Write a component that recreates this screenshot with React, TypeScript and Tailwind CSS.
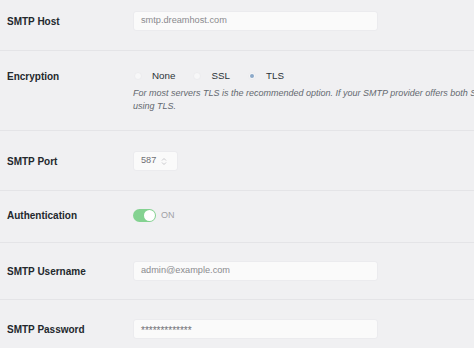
import React from "react";

function Label({ children }: { children: React.ReactNode }) {
  return (
    <div className="w-[133px] shrink-0 pl-[7px] text-[10px] font-bold text-[#23282d]">
      {children}
    </div>
  );
}

function TextBox({ value }: { value: string }) {
  return (
    <div className="w-[245px] h-[20px] flex items-center px-[7px] rounded-[3px] bg-[#fafafa] border border-[#ebebee] text-[9.2px] text-[#8a8a8e]">
      {value}
    </div>
  );
}

function Radio({ label, checked }: { label: string; checked?: boolean }) {
  return (
    <div className="flex items-center gap-[10px]">
      <span className="w-[8px] h-[8px] rounded-full bg-[#f7f7f8] border border-[#ececef] flex items-center justify-center">
        {checked && <span className="w-[4px] h-[4px] rounded-full bg-[#8ca9c9]" />}
      </span>
      <span className="text-[9.8px] text-[#2c3338]">{label}</span>
    </div>
  );
}

export default function App() {
  return (
    <div
      className="w-[474px] h-[348px] overflow-hidden bg-[#f0f0f2]"
      style={{ fontFamily: '"Liberation Sans", Arial, sans-serif' }}
    >
      {/* SMTP Host */}
      <div className="flex items-center pt-[11px] pb-[19px] border-b border-[#e4e4e7]">
        <Label>SMTP Host</Label>
        <TextBox value="smtp.dreamhost.com" />
      </div>

      {/* Encryption */}
      <div className="flex items-start pt-[18px] pb-[17px] border-b border-[#e4e4e7]">
        <div className="h-[14px] flex items-center">
          <Label>Encryption</Label>
        </div>
        <div className="flex flex-col">
          <div className="h-[14px] flex items-center gap-[18px] pl-[1px]">
            <Radio label="None" />
            <Radio label="SSL" />
            <Radio label="TLS" checked />
          </div>
          <p className="mt-[4px] text-[9px] leading-[13px] italic text-[#646970] whitespace-nowrap">
            For most servers TLS is the recommended option. If your SMTP provider offers both SSL and TLS options, we recommend
            <br />
            using TLS.
          </p>
        </div>
      </div>

      {/* SMTP Port */}
      <div className="flex items-center pt-[20px] pb-[19px] border-b border-[#e4e4e7]">
        <Label>SMTP Port</Label>
        <div className="w-[45px] h-[20px] flex items-center justify-between pl-[7px] pr-[10px] rounded-[3px] bg-[#fafafa] border border-[#ebebee] text-[9.2px] text-[#6f6f74]">
          <span>587</span>
          <svg width="6" height="9" viewBox="0 0 6 9" fill="none" stroke="#c9c9cd" strokeWidth="1">
            <path d="M1 3.5 L3 1.5 L5 3.5" />
            <path d="M1 5.5 L3 7.5 L5 5.5" />
          </svg>
        </div>
      </div>

      {/* Authentication */}
      <div className="flex items-center pt-[17px] pb-[19px] border-b border-[#e4e4e7]">
        <Label>Authentication</Label>
        <div className="flex items-center gap-[5px]">
          <div className="w-[23px] h-[13px] rounded-full bg-[#84d291] flex items-center justify-end pr-[1px]">
            <span className="w-[11px] h-[11px] rounded-full bg-white" />
          </div>
          <span className="text-[9px] text-[#a0a0a5]">ON</span>
        </div>
      </div>

      {/* SMTP Username */}
      <div className="flex items-center pt-[18px] pb-[18px] border-b border-[#e4e4e7]">
        <Label>SMTP Username</Label>
        <TextBox value="admin@example.com" />
      </div>

      {/* SMTP Password */}
      <div className="flex items-center pt-[19px] pb-[9px]">
        <Label>SMTP Password</Label>
        <div className="w-[245px] h-[20px] flex items-center px-[7px] rounded-[3px] bg-[#fafafa] border border-[#ebebee] text-[10px] text-[#707075] pt-[3px]">
          *************
        </div>
      </div>
    </div>
  );
}
